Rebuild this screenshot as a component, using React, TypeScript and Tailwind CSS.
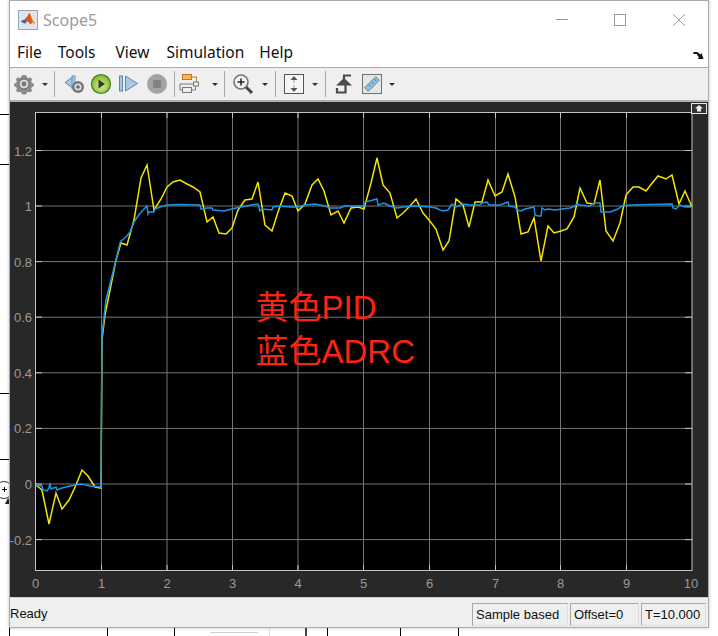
const yellow =
  "36,485 42,490 49,524 56,493 62,509 69,500 76,485 82,470 88,476 95,487 101,488 102,340 105,315 110,290 116,260 121,243 127,245 134,220 141,178 147,165 154,210 161,199 167,187 173,182 180,180 187,184 193,187 200,192 207,222 213,217 219,233 226,234 232,228 238,210 245,200 252,199 258,182 265,225 272,231 278,212 285,193 292,196 298,211 305,204 312,185 318,179 324,191 331,215 338,211 344,223 351,208 358,207 364,209 371,183 377,158 383,185 390,193 397,218 403,213 410,206 416,199 423,213 429,220 436,229 443,250 449,241 456,199 463,205 469,227 475,202 482,202 488,180 495,196 502,192 508,174 515,197 521,234 528,232 534,218 541,261 548,226 554,233 561,231 567,229 574,217 580,188 587,203 594,204 600,180 606,231 613,241 620,223 626,195 633,187 639,187 646,191 653,182 658,176 666,179 672,175 679,204 685,191 692,207";

const blue =
  "36,485 42,486 43,490 47,491 49,488 50,483 51,489 56,487 57,490 62,488 70,486 81,484 90,486 100,487 101,487 102,335 106,300 111,280 116,260 120,243 121,241 126,237 130,232 134,222 138,216 142,211 147,206 148,214 149,212 154,212 155,209 160,207 167,205 180,204.5 200,205 201,209 205,209 206,208 212,208 213,210 224,211 236,208 246,206 258,204 260,211 262,209 272,210 273,207 280,206 290,207 298,207 305,205 315,204 325,206 330,208 340,208 345,206 358,206 364,206 365,202 377,199 378,205 384,203 390,206 393,207 397,208 403,207 416,206 430,207 436,208 440,210 443,211 448,210 450,207 452,204 456,207 463,204 470,205 480,205 482,203 487,202 489,205 500,205 508,202 509,206 515,207 517,210 521,211 525,209 534,207 535,215 538,216 541,216 542,208 545,210 548,209 555,210 570,208 575,206 577,204 580,205 590,206 594,203 600,203 601,212 603,212 610,212 618,209 622,206 630,205 650,204.5 672,204 673,208 676,209 680,205 685,207 692,207";

const xTicks = [35.5, 101.5, 167, 232.5, 298, 363.5, 429.5, 495.5, 560.5, 626.5, 692];
const yTicks = [
  { y: 150.5, label: "1.2" },
  { y: 206, label: "1" },
  { y: 261.6, label: "0.8" },
  { y: 317.2, label: "0.6" },
  { y: 372.8, label: "0.4" },
  { y: 428.4, label: "0.2" },
  { y: 484, label: "0" },
  { y: 539.6, label: "-0.2" },
];

const Caret = ({ className = "" }: { className?: string }) => (
  <span className={`w-0 h-0 border-x-[3px] border-x-transparent border-t-[3px] border-t-[#333] shrink-0 ${className}`} />
);

const Sep = ({ className = "" }: { className?: string }) => (
  <span className={`w-px h-[26px] bg-[#a6a6a6] shrink-0 ${className}`} />
);

const Scope = () => (
  <svg viewBox="10 102 698 495" className="w-[698px] h-[495px] block" style={{ fontFamily: "'Liberation Sans', sans-serif" }}>
    <rect x="10" y="102" width="698" height="495" fill="#282828" />
    <rect x="35.5" y="112.5" width="656.5" height="458" fill="#000" />
    {xTicks.slice(1, -1).map((x) => (
      <line key={x} x1={x} x2={x} y1="112.5" y2="570.5" stroke="#757575" />
    ))}
    {yTicks.map((t) => (
      <line key={t.label} x1="35.5" x2="692" y1={t.y} y2={t.y} stroke="#757575" />
    ))}
    {xTicks.slice(1, -1).map((x) => (
      <g key={x} stroke="#c4c4c4">
        <line x1={x} x2={x} y1="112.5" y2="118" />
        <line x1={x} x2={x} y1="565" y2="570.5" />
      </g>
    ))}
    {yTicks.map((t) => (
      <g key={t.label} stroke="#c4c4c4">
        <line x1="35.5" x2="42" y1={t.y} y2={t.y} />
        <line x1="685" x2="692" y1={t.y} y2={t.y} />
      </g>
    ))}
    <rect x="35.5" y="112.5" width="656.5" height="458" fill="none" stroke="#c4c4c4" />
    <polyline points={yellow} fill="none" stroke="#f2e600" strokeWidth="1.5" />
    <polyline points={blue} fill="none" stroke="#1a94e6" strokeWidth="1.5" />
    {yTicks.map((t) => (
      <text key={t.label} x="32" y={t.y + 5} textAnchor="end" fontSize="13" fill="#9a9a9a">
        {t.label}
      </text>
    ))}
    {xTicks.map((x, i) => (
      <text key={x} x={i === 10 ? 691 : x} y="588" textAnchor="middle" fontSize="13" fill="#9a9a9a">
        {i}
      </text>
    ))}
    <text x="255.5" y="319" fontSize="33" fill="#fb2412" style={{ fontFamily: "'Liberation Sans', 'Noto Sans CJK SC', sans-serif" }}>
      黄色PID
    </text>
    <text x="255.5" y="363" fontSize="33" fill="#fb2412" style={{ fontFamily: "'Liberation Sans', 'Noto Sans CJK SC', sans-serif" }}>
      蓝色ADRC
    </text>
    <rect x="691.5" y="103.5" width="15" height="10" fill="#333" stroke="#e8e8e8" />
    <path d="M699 105l4 3.5h-2v3h-4v-3h-2z" fill="#eee" />
  </svg>
);

const Gear = () => (
  <svg viewBox="0 0 22 22" className="w-[22px] h-[22px] shrink-0">
    <path d="M11 2.500l2 .3.7 2 1.700.8 2-.8 1.400 1.600-1 1.900.5 1.700 2 .9v2.200l-2 .8-.6 1.800 1 1.800-1.500 1.600-2-.9-1.600.8-.7 2H9.200l-.7-2-1.700-.8-2 .9-1.400-1.600 1-1.800-.7-1.800-2-.8v-2.200l2-.9.6-1.700-1-1.900 1.500-1.600 2 .8 1.600-.8.7-2z" fill="#8c8c8c" stroke="#666" strokeWidth=".6" />
    <circle cx="11" cy="11" r="5" fill="#d8d8d8" stroke="#666" />
    <circle cx="11" cy="11" r="2.400" fill="#777" />
  </svg>
);

const Back = () => (
  <svg viewBox="0 0 22 22" className="w-[22px] h-[22px] shrink-0">
    <path d="M10 3v13L1 9.500z" fill="#a9c8e6" stroke="#5b88b4" strokeWidth="1" />
    <rect x="8" y="3" width="3" height="13" fill="#a9c8e6" stroke="#5b88b4" strokeWidth=".8" />
    <circle cx="14" cy="14" r="6" fill="#777" />
    <circle cx="14" cy="14" r="3.600" fill="#ddd" />
    <circle cx="14" cy="14" r="1.800" fill="#666" />
  </svg>
);

const Play = () => (
  <svg viewBox="0 0 22 22" className="w-[22px] h-[22px] shrink-0">
    <defs>
      <radialGradient id="playFill" cx="50%" cy="60%" r="60%">
        <stop offset="0%" stopColor="#d9ee9a" />
        <stop offset="100%" stopColor="#7bb323" />
      </radialGradient>
    </defs>
    <circle cx="11" cy="11" r="9.500" fill="url(#playFill)" stroke="#3f7a1a" strokeWidth="1.200" />
    <path d="M8.500 6.500l6.500 4.500-6.500 4.500z" fill="#3a3a2c" />
  </svg>
);

const Step = () => (
  <svg viewBox="0 0 22 22" className="w-[22px] h-[22px] shrink-0">
    <rect x="1.500" y="3" width="3" height="15" fill="#a9c8e6" stroke="#5b88b4" />
    <path d="M7.500 3v15l12-7.500z" fill="#a9c8e6" stroke="#5b88b4" />
  </svg>
);

const Stop = () => (
  <svg viewBox="0 0 22 22" className="w-[22px] h-[22px] shrink-0">
    <circle cx="11" cy="11" r="10" fill="#a3a3a3" />
    <rect x="7" y="7" width="8" height="8" rx="1" fill="#818181" />
  </svg>
);

const Blocks = () => (
  <svg viewBox="0 0 22 22" className="w-[22px] h-[22px] shrink-0">
    <rect x="3.500" y="1.500" width="9" height="5" fill="#f2b65e" stroke="#c9781c" />
    <path d="M12.500 4h5v5" fill="none" stroke="#c9781c" />
    <rect x="14.500" y="9" width="5" height="4" fill="#eee" stroke="#777" />
    <path d="M14.500 11H1v6h2" fill="none" stroke="#777" />
    <rect x="3.500" y="14.500" width="9" height="5" fill="#eee" stroke="#777" />
    <path d="M12.500 17h4v-4" fill="none" stroke="#777" />
  </svg>
);

const Zoom = () => (
  <svg viewBox="0 0 22 22" className="w-[22px] h-[22px] shrink-0">
    <circle cx="9" cy="9" r="7" fill="#eef3f6" stroke="#777" strokeWidth="1.600" />
    <path d="M5.500 9h7M9 5.500v7" stroke="#222" strokeWidth="1.500" />
    <path d="M14 14l6 6" stroke="#444" strokeWidth="3" />
  </svg>
);

const Fit = () => (
  <svg viewBox="0 0 20 20" className="w-5 h-5 shrink-0">
    <rect x=".5" y=".5" width="19" height="19" fill="#f6f6f6" stroke="#555" />
    <path d="M10 2l3.500 4h-7zM10 18l3.500-4h-7z" fill="#555" />
    <path d="M10 6v3M10 11v3" stroke="#999" />
  </svg>
);

const Scale = () => (
  <svg viewBox="0 0 22 22" className="w-[22px] h-[22px] shrink-0">
    <path d="M18 2.500h-7V7" fill="none" stroke="#4a4a4a" strokeWidth="2.200" />
    <path d="M3 12.500L11 5l8 7.500z" fill="#4a4a4a" />
    <path d="M12.500 12v7.500H4V15" fill="none" stroke="#4a4a4a" strokeWidth="2.200" />
  </svg>
);

const Ruler = () => (
  <svg viewBox="0 0 22 22" className="w-5 h-5 shrink-0">
    <rect x=".5" y=".5" width="21" height="21" fill="#e6e6e6" stroke="#666" />
    <path d="M3 15L15 3l4 4L7 19z" fill="#8fc4e4" stroke="#4a7f9f" />
    <path d="M8 12l1.500 1.500M11 9l1.500 1.500M14 6l1.500 1.500" stroke="#345" />
  </svg>
);

const Logo = () => (
  <svg viewBox="0 0 20 20" className="w-5 h-5 shrink-0">
    <rect x=".5" y=".5" width="19" height="19" fill="#dfe5ee" stroke="#9aa3b0" />
    <path d="M2.500 11.500l4-2 3-3.500 2-3.500 2.500 6 3 5.500-2.500-1.500-2 2-2.500-3-2 .5z" fill="#e0561c" />
    <path d="M2.500 11.500l4-2 2 3.500-2 .5z" fill="#2a6fb0" />
    <path d="M11.500 2.500l2.500 6 3 5.500-2.500-1.500z" fill="#f3a01f" />
  </svg>
);

const App = () => {
  return (
    <div className="relative w-[718px] h-[636px] bg-white overflow-hidden" style={{ fontFamily: "'Noto Sans', sans-serif" }}>
      {/* what shows behind the scope window */}
      <div className="absolute left-0 top-[114px] w-[9px] h-px bg-black" />
      <div className="absolute left-0 top-[164px] w-[9px] h-px bg-black" />
      <div className="absolute left-0 top-[393px] w-[9px] h-px bg-black" />
      <div className="absolute left-0 top-[459px] w-[9px] h-px bg-black" />
      <div className="absolute left-[-5px] top-[481px] w-[18px] h-[18px] rounded-full border border-[#333]" />
      <div className="absolute left-[2px] top-[489px] w-[5px] h-px bg-black" />
      <div className="absolute left-[4px] top-[487px] w-px h-[5px] bg-black" />
      <div className="absolute left-[5px] top-[498px] w-0 h-0 border-x-[3px] border-x-transparent border-b-[6px] border-b-[#222]" />
      <div className="absolute left-[9px] top-[627px] w-px h-[9px] bg-black" />
      <div className="absolute left-[107px] top-[627px] w-px h-[9px] bg-black" />
      <div className="absolute left-[174px] top-[627px] w-px h-[9px] bg-black" />
      <div className="absolute left-[210px] top-[632px] w-[48px] h-px bg-[#cfcfcf]" />
      <div className="absolute left-[269px] top-[627px] w-px h-[9px] bg-[#e2e2e2]" />
      <div className="absolute left-[305px] top-[627px] w-[2px] h-[9px] bg-[#444]" />
      <div className="absolute left-[327px] top-[627px] w-px h-[9px] bg-black" />
      <div className="absolute left-[400px] top-[627px] w-px h-[9px] bg-black" />
      <div className="absolute left-[458px] top-[627px] w-px h-[9px] bg-black" />

      <div className="relative ml-[9px] w-[700px] h-[628px] flex flex-col border border-[#ababab] shadow-[0_0_3px_rgba(0,0,0,0.25)] bg-white">
        <div className="h-[37px] flex items-center shrink-0 pl-[8px]">
          <Logo />
          <span className="ml-[5px] text-[16px] text-[#9a9ba3]">Scope5</span>
          <div className="ml-auto flex items-center">
            <span className="w-3 h-px bg-[#999] mr-[46px]" />
            <span className="w-3 h-3 border border-[#999] mr-[47px]" />
            <svg viewBox="0 0 12 12" className="w-3 h-3 mr-[23px]">
              <path d="M0 0l12 12M12 0L0 12" stroke="#888" strokeWidth=".8" />
            </svg>
          </div>
        </div>
        <div className="h-[30px] shrink-0 flex items-center pl-[7px] text-[15.500px] text-[#111] border-b border-[#ababab] relative">
          <span>File</span>
          <span className="ml-[16px]">Tools</span>
          <span className="ml-[20px]">View</span>
          <span className="ml-[17px]">Simulation</span>
          <span className="ml-[15px]">Help</span>
          <svg viewBox="0 0 10 8" className="w-[11px] h-2 ml-auto mr-[4px] mt-[4px]">
            <path d="M0 1h4L7 3.500 8 2l2 6H4l1.500-1.500L3 3H0z" fill="#111" />
          </svg>
        </div>
        <div className="h-[34px] shrink-0 flex items-center bg-[#efefef] border-b-2 border-[#b0b0b0]">
          <span className="ml-[3px]"><Gear /></span>
          <Caret className="ml-[7px]" />
          <Sep className="ml-[6px]" />
          <span className="ml-[9px]"><Back /></span>
          <span className="ml-[4px]"><Play /></span>
          <span className="ml-[6px]"><Step /></span>
          <span className="ml-[6px]"><Stop /></span>
          <Sep className="ml-[6px]" />
          <span className="ml-[4px]"><Blocks /></span>
          <Caret className="ml-[11px]" />
          <Sep className="ml-[6px]" />
          <span className="ml-[7px]"><Zoom /></span>
          <Caret className="ml-[8px]" />
          <Sep className="ml-[7px]" />
          <span className="ml-[8px]"><Fit /></span>
          <Caret className="ml-[8px]" />
          <Sep className="ml-[7px]" />
          <span className="ml-[7px]"><Scale /></span>
          <span className="ml-[7px]"><Ruler /></span>
          <Caret className="ml-[7px]" />
        </div>
        <Scope />
        <div className="flex-1 flex items-center bg-[#efefef] border-t border-[#cfcfcf] pr-[2px] text-[13px] text-[#111]" style={{ fontFamily: "'Liberation Sans', sans-serif" }}>
          <span className="mt-[2px]">Ready</span>
          <div className="ml-auto flex gap-[2px] h-[23px] mt-[4px]">
            <span className="w-[96px] pl-[3px] flex items-center border-l border-t border-[#a8a8a8] border-r border-r-[#ddd] border-b border-b-[#ddd]">Sample based</span>
            <span className="w-[69px] pl-[3px] flex items-center border-l border-t border-[#a8a8a8] border-r border-r-[#ddd] border-b border-b-[#ddd]">Offset=0</span>
            <span className="w-[65px] pl-[3px] flex items-center border-l border-t border-[#a8a8a8] border-r border-r-[#ddd] border-b border-b-[#ddd]">T=10.000</span>
          </div>
        </div>
      </div>
    </div>
  );
};

export default App;
